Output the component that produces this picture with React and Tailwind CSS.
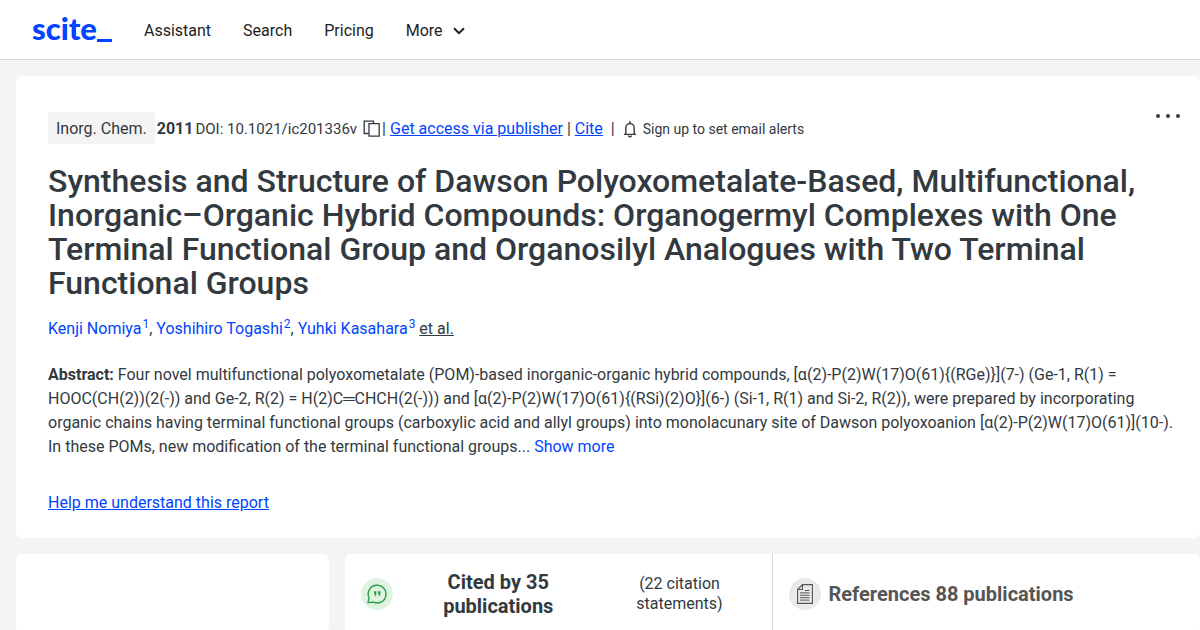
import React from 'react';

const NAV_LINKS = ['Assistant', 'Search', 'Pricing'];

const AUTHORS = [
    { name: 'Kenji Nomiya', ref: 1 },
    { name: 'Yoshihiro Togashi', ref: 2 },
    { name: 'Yuhki Kasahara', ref: 3 },
];

const ChevronIcon = () => (
    <svg width="12" height="8" viewBox="0 0 12 8" fill="none" stroke="currentColor" strokeWidth="2">
        <path d="M1 1.2l5 5 5-5" />
    </svg>
);

const Header = () => (
    <header className="flex items-center h-15 px-8 bg-white border-b border-[#d9d9d9]">
        <a href="#" className="flex items-end mr-8 pb-1 text-[#0044ff]" aria-label="scite home">
            <span className="font-['Lato'] font-black text-[31px] leading-9">scite</span>
            <span className="w-[15px] h-[3px] mb-1 bg-[#0044ff]" />
        </a>
        <nav className="flex items-center gap-8 pt-0.5 text-[#1d1d1d]">
            {NAV_LINKS.map(label => (
                <a key={label} href="#">{label}</a>
            ))}
            <button className="flex items-center gap-2.5">
                More <ChevronIcon />
            </button>
        </nav>
    </header>
);

const CopyIcon = () => (
    <svg width="18" height="18" viewBox="0 0 18 18" fill="none" stroke="currentColor" strokeWidth="1.3">
        <path d="M5.5 13.5H1.2V1.2h9.3v2.3" />
        <path d="M6 3.6h10.2v12.6H6z" />
    </svg>
);

const BellIcon = () => (
    <svg width="14" height="17" viewBox="0 0 14 17" fill="none" stroke="currentColor" strokeWidth="1.4">
        <path d="M7 0v2M1 13.4h12M2.8 13.2V7a4.2 4.5 0 0 1 8.4 0v6.2" />
        <path d="M5.6 14.4a1.4 1.4 0 0 0 2.8 0" />
    </svg>
);

const QuoteBubbleIcon = () => (
    <svg width="20" height="20" viewBox="0 0 20 20" fill="none" stroke="currentColor" strokeWidth="1.4">
        <path d="M1 18.6l1-4.8A8.9 8.9 0 1 1 6.4 18.2z" strokeLinejoin="round" />
        <path d="M7 7.2h2.4v2.6q0 2-1.6 2.8v-2.6H7zM11 7.2h2.4v2.6q0 2-1.6 2.8v-2.6H11z" fill="currentColor" stroke="none" />
    </svg>
);

const DocumentIcon = () => (
    <svg width="16" height="20" viewBox="0 0 16 20" fill="none" stroke="currentColor">
        <path d="M5.5.6h9.9v18.8H.6V5.5zM5.5.6v4.9H.6" strokeWidth="1.1" />
        <path d="M8 6.5h4.5M3 8.9h9.5M3 11.3h9.5M3 13.7h9.5M3 16.1h9.5" />
    </svg>
);

const ReportCard = () => (
    <section className="bg-white rounded-md pt-9 pb-[23px] pl-8 pr-5">
        <div className="flex items-start justify-between">
            <div className="flex items-center h-8">
                <span className="bg-[#f4f4f4] rounded px-2 pt-[5px] pb-[3px] mr-0.5">Inorg. Chem.</span>
                <div className="flex items-center pt-0.5">
                    <strong className="mr-0.5">2011</strong>
                    <span className="text-[15px]">DOI: 10.1021/ic201336v</span>
                    <button className="ml-1.5 mr-px" title="Copy DOI"><CopyIcon /></button>
                    <span className="mr-1">|</span>
                    <a href="#" className="text-[#0044ff] underline">Get access via publisher</a>
                    <span className="mx-1">|</span>
                    <a href="#" className="text-[#0044ff] underline">Cite</a>
                    <span className="mx-2">|</span>
                    <button className="flex items-center gap-1.5 text-sm">
                        <BellIcon /> Sign up to set email alerts
                    </button>
                </div>
            </div>
            <button className="flex gap-1.5 py-0.5" aria-label="More options">
                <span className="size-1 rounded-full bg-[#32393f]" />
                <span className="size-1 rounded-full bg-[#32393f]" />
                <span className="size-1 rounded-full bg-[#32393f]" />
            </button>
        </div>

        <h1 className="mt-5 text-[32px] leading-[34px] font-medium">
            Synthesis and Structure of Dawson Polyoxometalate-Based, Multifunctional,<br />
            Inorganic–Organic Hybrid Compounds: Organogermyl Complexes with One<br />
            Terminal Functional Group and Organosilyl Analogues with Two Terminal<br />
            Functional Groups
        </h1>

        <p className="mt-[17px]">
            {AUTHORS.map((author, i) => (
                <React.Fragment key={author.name}>
                    <a href="#" className="text-[#0044ff]">{author.name}<sup className="ml-px">{author.ref}</sup></a>
                    {i < AUTHORS.length - 1 ? ', ' : ' '}
                </React.Fragment>
            ))}
            <a href="#" className="underline">et al.</a>
        </p>

        <p className="mt-[22px]">
            <strong>Abstract:</strong> Four novel multifunctional polyoxometalate (POM)-based inorganic-organic hybrid compounds, [α(2)-P(2)W(17)O(61){'{'}(RGe){'}'}](7-) (Ge-1, R(1) =<br />
            HOOC(CH(2))(2(-)) and Ge-2, R(2) = H(2)C═CHCH(2(-))) and [α(2)-P(2)W(17)O(61){'{'}(RSi)(2)O{'}'}](6-) (Si-1, R(1) and Si-2, R(2)), were prepared by incorporating<br />
            organic chains having terminal functional groups (carboxylic acid and allyl groups) into monolacunary site of Dawson polyoxoanion [α(2)-P(2)W(17)O(61)](10-).<br />
            In these POMs, new modification of the terminal functional groups... <button className="text-[#0044ff]">Show more</button>
        </p>

        <a href="#" className="inline-block mt-8 text-[#0044ff] underline">Help me understand this report</a>
    </section>
);

const CitationTabs = () => (
    <section className="flex-1 grid grid-cols-2 bg-white rounded-md">
        <button className="flex items-center px-4 border-r border-[#d9d9d9]">
            <span className="size-8 flex items-center justify-center rounded-full bg-[#ddf5e0] text-[#2f9e44]">
                <QuoteBubbleIcon />
            </span>
            <span className="flex-1 px-8 text-xl leading-6 font-bold">Cited by 35 publications</span>
            <span className="w-38 px-6 leading-5">(22 citation statements)</span>
        </button>
        <button className="flex items-center gap-2 px-4 text-[#555]">
            <span className="size-8 flex items-center justify-center rounded-full bg-[#e9e9e9]">
                <DocumentIcon />
            </span>
            <span className="text-xl leading-6 font-bold">References 88 publications</span>
        </button>
    </section>
);

const App = () => (
    <div className="min-h-screen bg-[#f4f4f4] font-['Roboto',sans-serif] text-base text-[#32393f]">
        <Header />
        <main className="pt-4 pl-4 flex flex-col gap-4">
            <ReportCard />
            <div className="flex gap-4 h-[79px]">
                <aside className="w-[313px] bg-white rounded-md" />
                <CitationTabs />
            </div>
        </main>
    </div>
);

export default App;
